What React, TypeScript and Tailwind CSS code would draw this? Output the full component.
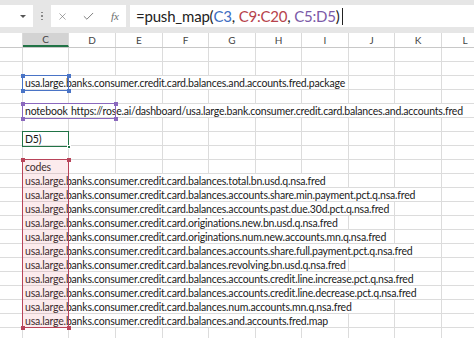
import React from 'react';
import { X, Check } from 'lucide-react';

const COLS = [
  { name: 'B', w: 23 },
  { name: 'C', w: 46 },
  { name: 'D', w: 47 },
  { name: 'E', w: 47 },
  { name: 'F', w: 46 },
  { name: 'G', w: 47 },
  { name: 'H', w: 46 },
  { name: 'I', w: 47 },
  { name: 'J', w: 46 },
  { name: 'K', w: 47 },
  { name: 'L', w: 47 },
];

const codes = [
  'usa.large.banks.consumer.credit.card.balances.total.bn.usd.q.nsa.fred',
  'usa.large.banks.consumer.credit.card.balances.accounts.share.min.payment.pct.q.nsa.fred',
  'usa.large.banks.consumer.credit.card.balances.accounts.past.due.30d.pct.q.nsa.fred',
  'usa.large.banks.consumer.credit.card.originations.new.bn.usd.q.nsa.fred',
  'usa.large.banks.consumer.credit.card.originations.num.new.accounts.mn.q.nsa.fred',
  'usa.large.banks.consumer.credit.card.balances.accounts.share.full.payment.pct.q.nsa.fred',
  'usa.large.banks.consumer.credit.card.balances.revolving.bn.usd.q.nsa.fred',
  'usa.large.banks.consumer.credit.card.balances.accounts.credit.line.increase.pct.q.nsa.fred',
  'usa.large.banks.consumer.credit.card.balances.accounts.credit.line.decrease.pct.q.nsa.fred',
  'usa.large.banks.consumer.credit.card.balances.num.accounts.mn.q.nsa.fred',
  'usa.large.banks.consumer.credit.card.balances.and.accounts.fred.map',
];

// row number -> { col index: text }
const cells: Record<number, Record<number, string>> = {
  3: { 1: 'usa.large.banks.consumer.credit.card.balances.and.accounts.fred.package' },
  5: { 1: 'notebook', 2: 'https://rose.ai/dashboard/usa.large.bank.consumer.credit.card.balances.and.accounts.fred' },
  7: { 1: 'D5)' },
  9: { 1: 'codes' },
};
codes.forEach((c, i) => {
  cells[10 + i] = { 1: c };
});

const rows = Array.from({ length: 21 }, (_, i) => i + 1);

function RangeBox({ top, left, width, height, color, fill }: {
  top: number; left: number; width: number; height: number; color: string; fill?: string;
}) {
  return (
    <div
      className="absolute pointer-events-none"
      style={{ top, left, width, height, border: `1px solid ${color}`, background: fill }}
    >
      <span className="absolute w-[4px] h-[4px] -left-[2.5px] -top-[2.5px]" style={{ background: color }} />
      <span className="absolute w-[4px] h-[4px] -right-[2.5px] -top-[2.5px]" style={{ background: color }} />
      <span className="absolute w-[4px] h-[4px] -left-[2.5px] -bottom-[2.5px]" style={{ background: color }} />
      <span className="absolute w-[4px] h-[4px] -right-[2.5px] -bottom-[2.5px]" style={{ background: color }} />
    </div>
  );
}

export default function App() {
  return (
    <div className="w-[474px] h-[338px] overflow-hidden bg-white relative" style={{ fontFamily: 'Lato, "Liberation Sans", sans-serif' }}>
      {/* formula bar */}
      <div className="h-[33px] bg-[#e6e6e6] flex items-start pt-[5px]">
        <div className="w-[33px] h-[22px] bg-white flex items-center justify-end pr-[7px]">
          <span className="w-0 h-0 border-l-[3px] border-r-[3px] border-t-[3px] border-l-transparent border-r-transparent border-t-[#555]" />
        </div>
        <div className="w-[18px] h-[22px] flex flex-col items-center justify-center gap-[2px]">
          <span className="w-[1.5px] h-[1.5px] bg-[#888]" />
          <span className="w-[1.5px] h-[1.5px] bg-[#888]" />
          <span className="w-[1.5px] h-[1.5px] bg-[#888]" />
        </div>
        <div className="w-[75px] h-[22px] bg-white flex items-center text-[#6b6b6b]">
          <X size={11} strokeWidth={1.3} className="ml-[6px]" />
          <Check size={13} strokeWidth={1.6} className="ml-[14px]" />
          <span className="ml-[16px] italic text-[11px]" style={{ fontFamily: '"Liberation Serif", serif' }}>fx</span>
        </div>
        <div className="ml-[4px] flex-1 h-[22px] bg-white flex items-center pl-[6px] text-[15px] tracking-[-0.2px] text-[#222]">
          <span>=push_map(</span>
          <span className="text-[#3d6ec2]">C3</span>
          <span>,&nbsp;</span>
          <span className="text-[#b7434c]">C9:C20</span>
          <span>,&nbsp;</span>
          <span className="text-[#7b5aa8]">C5:D5</span>
          <span>)</span>
          <span className="ml-[2px] w-[1px] h-[17px] bg-[#222]" />
        </div>
      </div>

      {/* column headers */}
      <div className="flex h-[15px] bg-white border-b border-[#c8c8c8] text-[10px] text-[#444]">
        {COLS.map((c, i) => (
          <div
            key={c.name}
            className={`shrink-0 flex items-center border-r border-[#dadada] ${i === 0 ? 'justify-start -ml-[9px]' : 'justify-center'} ${c.name === 'C' ? 'bg-[#d3d3d3] border-b-2 border-b-[#217346]' : ''}`}
            style={{ width: i === 0 ? c.w + 9 : c.w }}
          >
            {c.name}
          </div>
        ))}
      </div>

      {/* grid */}
      <div className="relative text-[10.5px] tracking-[-0.2px] text-[#1a1a1a]">
        {rows.map((r) => (
          <div key={r} className="flex h-[14px]">
            {COLS.map((c, ci) => {
              const text = cells[r]?.[ci];
              return (
                <div
                  key={c.name}
                  className="shrink-0 relative border-r border-b border-[#dcdcdc]"
                  style={{ width: c.w }}
                >
                  {text && (
                    <span className="absolute left-0 top-0 h-[13px] leading-[14px] pl-[2px] pr-[1px] whitespace-nowrap bg-white z-10">
                      {text}
                    </span>
                  )}
                </div>
              );
            })}
          </div>
        ))}

        {/* reference range overlays */}
        <div className="absolute inset-0 z-20 pointer-events-none">
          <RangeBox top={27} left={22} width={47} height={16} color="#4a74c6" />
          <RangeBox top={55} left={22} width={94} height={16} color="#8a68bd" />
          <div className="absolute top-[83px] left-[22px] w-[47px] h-[16px] border-[1.5px] border-[#217346]">
            <span className="absolute w-[4px] h-[4px] -right-[3px] -bottom-[3px] bg-[#217346] border border-white" />
          </div>
          <RangeBox top={111} left={22} width={47} height={169} color="#b8445a" fill="rgba(235,120,135,0.15)" />
        </div>
      </div>
    </div>
  );
}
